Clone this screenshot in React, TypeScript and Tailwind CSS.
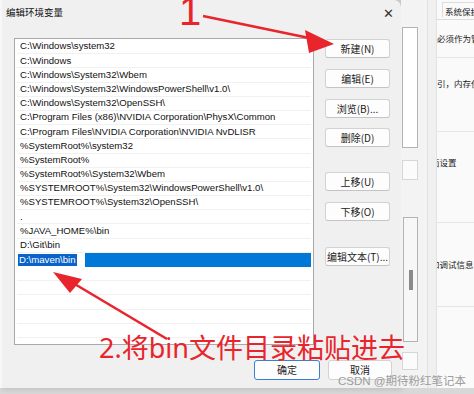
const paths = [
  "C:\\Windows\\system32",
  "C:\\Windows",
  "C:\\Windows\\System32\\Wbem",
  "C:\\Windows\\System32\\WindowsPowerShell\\v1.0\\",
  "C:\\Windows\\System32\\OpenSSH\\",
  "C:\\Program Files (x86)\\NVIDIA Corporation\\PhysX\\Common",
  "C:\\Program Files\\NVIDIA Corporation\\NVIDIA NvDLISR",
  "%SystemRoot%\\system32",
  "%SystemRoot%",
  "%SystemRoot%\\System32\\Wbem",
  "%SYSTEMROOT%\\System32\\WindowsPowerShell\\v1.0\\",
  "%SYSTEMROOT%\\System32\\OpenSSH\\",
  ".",
  "%JAVA_HOME%\\bin",
  "D:\\Git\\bin",
];

const WinButton = ({ label, className = "" }: { label: string; className?: string }) => (
  <button
    className={`h-[19px] w-[65px] rounded-[3px] border border-[#d2d2d2] border-b-[#c4c4c4] bg-[#fdfdfd] text-[10px] leading-none text-[#1b1b1b] ${className}`}
  >
    {label}
  </button>
);

const PathList = () => (
  <div className="h-[307px] w-[300px] overflow-hidden border border-[#a9a9a9] bg-white pt-[1px]">
    {paths.map((p) => (
      <div
        key={p}
        className="mx-[2px] flex h-[14.2px] items-center whitespace-nowrap border-b border-[#f1f1f1] pl-[3px] font-['Liberation_Sans',sans-serif] text-[9.6px] text-[#111]"
      >
        {p}
      </div>
    ))}
    <div className="mx-[2px] flex h-[14.2px] items-center bg-[#0078d7]">
      <div className="flex h-full items-center border border-white">
        <span className="flex h-full items-center bg-[#0a63c9] px-[1px] font-['Liberation_Sans',sans-serif] text-[9.6px] text-white">
          D:\maven\bin
        </span>
        <span className="h-full w-[7px] bg-white" />
      </div>
    </div>
    {[0, 1, 2, 3, 4].map((i) => (
      <div key={i} className="mx-[2px] h-[14.2px] border-b border-[#f1f1f1]" />
    ))}
  </div>
);

const Dialog = () => (
  <div className="flex h-[388px] w-[401px] shrink-0 flex-col rounded-tr-[7px] border-l-[2px] border-[#f7f7f7] bg-[#f0f0f0] shadow-[2px_0_6px_rgba(0,0,0,0.18)]">
    <div className="flex h-[24px] items-center justify-between pl-[4px] pr-[7px]">
      <span className="text-[9.5px] text-[#111]">编辑环境变量</span>
      <span className="text-[13px] font-light leading-none text-[#333]">✕</span>
    </div>
    <div className="flex pl-[12px] pt-[14px]">
      <PathList />
      <div className="ml-[11px] flex flex-col">
        <WinButton label="新建(N)" className="mt-[1px]" />
        <WinButton label="编辑(E)" className="mt-[11px]" />
        <WinButton label="浏览(B)..." className="mt-[11px]" />
        <WinButton label="删除(D)" className="mt-[10px]" />
        <WinButton label="上移(U)" className="mt-[25px]" />
        <WinButton label="下移(O)" className="mt-[11px]" />
        <WinButton label="编辑文本(T)..." className="mt-[26px]" />
      </div>
    </div>
    <div className="mt-[15px] flex justify-end gap-[8px] pr-[9px]">
      <button className="h-[20px] w-[66px] rounded-[3px] border-[1.5px] border-[#3d7fcf] bg-[#fdfdfd] text-[10px] leading-none text-[#1b1b1b]">
        确定
      </button>
      <button className="h-[20px] w-[64px] rounded-[3px] border border-[#d2d2d2] bg-[#fdfdfd] text-[10px] leading-none text-[#1b1b1b]">
        取消
      </button>
    </div>
  </div>
);

const BackWindow = () => (
  <div className="flex h-[388px] flex-1 bg-[#f3f3f3] text-[8.5px] text-[#222]">
    <div className="flex w-[26px] flex-col pl-[1px] pt-[27px]">
      <div className="h-[121px] w-[16px] border border-[#b3b3b3] bg-white" />
      <div className="mt-[12px] h-[20px] w-[16px] border border-[#d6d6d6] bg-[#fbfbfb]" />
      <div className="relative ml-[1px] mt-[37px] h-[125px] w-[15px] border border-[#b3b3b3] bg-[#f7f7f7]">
        <div className="absolute left-[5px] top-[52px] h-[20px] w-[4px] bg-[#8a8a8a]" />
      </div>
      <div className="mt-[10px] h-[18px] w-[16px] border border-[#d6d6d6] bg-[#fbfbfb]" />
    </div>
    <div className="w-[10px] border-x border-[#e2e2e2] bg-[#f0f0f0]" />
    <div className="flex flex-1 flex-col overflow-hidden whitespace-nowrap bg-[#fafafa]">
      <div className="flex h-[20px] items-center border-b border-[#dcdcdc] pl-[5px]">
        <span className="border-l border-t border-[#dcdcdc] pl-[2px] pt-[2px]">系统保护</span>
      </div>
      <div className="flex h-[38px] items-center border-b border-[#e6e6e6]">必须作为管</div>
      <div className="flex h-[74px] items-start border-b border-[#e6e6e6] pt-[19px]">引，内存使</div>
      <div className="flex h-[90px] items-start pt-[24px]">
        <span className="-ml-[6px]">面设置</span>
      </div>
      <div className="flex h-[85px] items-center border-y border-[#e6e6e6]">
        <span className="-ml-[6px]">和调试信息</span>
      </div>
    </div>
  </div>
);

const Annotations = () => (
  <>
    <svg className="pointer-events-none absolute inset-0" width="474" height="394" viewBox="0 0 474 394">
      <line x1="203" y1="16" x2="314" y2="39" stroke="#e8242c" strokeWidth="2.6" />
      <polygon points="334,44 305,30 309,53" fill="#e8242c" />
      <line x1="167" y1="339" x2="68" y2="280" stroke="#e8242c" strokeWidth="2.6" />
      <polygon points="53,272 82,279 70,293" fill="#e8242c" />
    </svg>
    <span className="pointer-events-none absolute left-[179px] top-[-9px] font-['Liberation_Sans',sans-serif] text-[40px] leading-none text-[#e8242c]">
      1
    </span>
    <span className="pointer-events-none absolute left-[99px] top-[334px] whitespace-nowrap font-['Noto_Sans','Noto_Sans_CJK_SC',sans-serif] text-[27px] leading-none text-[#e8242c]">
      2.将bin文件目录粘贴进去
    </span>
    <span className="pointer-events-none absolute left-[338px] top-[376px] whitespace-nowrap font-['Liberation_Sans','Noto_Sans_CJK_SC',sans-serif] text-[11.5px] leading-none text-[#9d9d9d]">
      CSDN @期待粉红笔记本
    </span>
  </>
);

export default function App() {
  return (
    <div className="relative h-[394px] w-[474px] overflow-hidden bg-[#d8d8d8] font-['Noto_Sans_CJK_SC','Noto_Sans',sans-serif]">
      <div className="flex">
        <Dialog />
        <BackWindow />
      </div>
      <Annotations />
    </div>
  );
}
